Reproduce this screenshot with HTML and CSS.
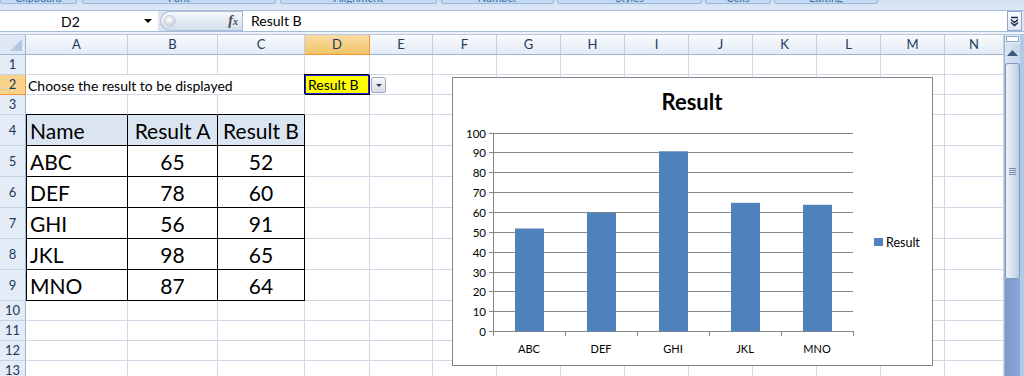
FILE: index.html
```html
<!DOCTYPE html>
<html lang="en">
  <head>
    <meta charset="UTF-8" />
    <meta name="viewport" content="width=device-width, initial-scale=1.0" />
    <title>Choose the result - Excel</title>
    <link rel="stylesheet" href="styles.css">
  </head>
  <body>
    <div class="ribbon">
      <div class="group g-clip"><span>Clipboard</span></div>
      <div class="group g-font"><span>Font</span></div>
      <div class="group g-align"><span>Alignment</span></div>
      <div class="group g-number"><span>Number</span></div>
      <div class="group g-styles"><span>Styles</span></div>
      <div class="group g-cells"><span>Cells</span></div>
      <div class="group g-edit"><span>Editing</span></div>
    </div>

    <div class="formula-bar">
      <div class="name-box"><span class="ref">D2</span><span class="drop"></span></div>
      <div class="fx-pill"><span class="knob"></span><span class="fx">f<small>x</small></span></div>
      <div class="formula">Result B</div>
      <div class="expand">
        <svg width="9" height="11" viewBox="0 0 9 11">
          <path d="M1 1.5h7M1 3.5l3.5 3 3.5-3M1 6.5l3.5 3 3.5-3" fill="none" stroke="#1d2d4c" stroke-width="1.4"/>
        </svg>
      </div>
    </div>
    <div class="bar-gap"></div>

    <div class="workarea">
      <div class="sheet">
        <div class="grid">
          <div class="corner"></div><div class="ch">A</div><div class="ch">B</div><div class="ch">C</div><div class="ch sel">D</div><div class="ch">E</div><div class="ch">F</div><div class="ch">G</div><div class="ch">H</div><div class="ch">I</div><div class="ch">J</div><div class="ch">K</div><div class="ch">L</div><div class="ch">M</div><div class="ch">N</div>
          <div class="rh">1</div><div></div><div></div><div></div><div></div><div></div><div></div><div></div><div></div><div></div><div></div><div></div><div></div><div></div><div></div>
          <div class="rh sel">2</div><div class="over intro">Choose the result to be displayed</div><div class="over"></div><div></div><div class="pick">Result B</div><div></div><div></div><div></div><div></div><div></div><div></div><div></div><div></div><div></div><div></div>
          <div class="rh">3</div><div class="above"></div><div class="above"></div><div class="above"></div><div></div><div></div><div></div><div></div><div></div><div></div><div></div><div></div><div></div><div></div><div></div>
          <div class="rh">4</div><div class="t hd first">Name</div><div class="t hd num">Result A</div><div class="t hd num">Result B</div><div></div><div></div><div></div><div></div><div></div><div></div><div></div><div></div><div></div><div></div><div></div>
          <div class="rh">5</div><div class="t first">ABC</div><div class="t num">65</div><div class="t num">52</div><div></div><div></div><div></div><div></div><div></div><div></div><div></div><div></div><div></div><div></div><div></div>
          <div class="rh">6</div><div class="t first">DEF</div><div class="t num">78</div><div class="t num">60</div><div></div><div></div><div></div><div></div><div></div><div></div><div></div><div></div><div></div><div></div><div></div>
          <div class="rh">7</div><div class="t first">GHI</div><div class="t num">56</div><div class="t num">91</div><div></div><div></div><div></div><div></div><div></div><div></div><div></div><div></div><div></div><div></div><div></div>
          <div class="rh">8</div><div class="t first">JKL</div><div class="t num">98</div><div class="t num">65</div><div></div><div></div><div></div><div></div><div></div><div></div><div></div><div></div><div></div><div></div><div></div>
          <div class="rh">9</div><div class="t first">MNO</div><div class="t num">87</div><div class="t num">64</div><div></div><div></div><div></div><div></div><div></div><div></div><div></div><div></div><div></div><div></div><div></div>
          <div class="rh">10</div><div></div><div></div><div></div><div></div><div></div><div></div><div></div><div></div><div></div><div></div><div></div><div></div><div></div><div></div>
          <div class="rh">11</div><div></div><div></div><div></div><div></div><div></div><div></div><div></div><div></div><div></div><div></div><div></div><div></div><div></div><div></div>
          <div class="rh">12</div><div></div><div></div><div></div><div></div><div></div><div></div><div></div><div></div><div></div><div></div><div></div><div></div><div></div><div></div>
          <div class="rh">13</div><div></div><div></div><div></div><div></div><div></div><div></div><div></div><div></div><div></div><div></div><div></div><div></div><div></div><div></div>
        </div>

        <!-- data validation list button next to D2 -->
        <div class="list-btn"><span></span></div>

        <div class="chart">
          <svg width="479" height="287" viewBox="0 0 479 287">
            <text class="title" x="239" y="32">Result</text>
            <path class="lines" d="M36 55.5H400M36 74.5H400M36 94.5H400M36 114.5H400M36 134.5H400M36 154.5H400M36 174.5H400M36 194.5H400M36 213.5H400M36 233.5H400M36 253.5H400M40.5 55V258M112.5 253V258M184.5 253V258M256.5 253V258M328.5 253V258M400.5 253V258"/>
            <g class="bars">
              <rect x="62" y="150.5" width="29" height="103"/>
              <rect x="134" y="134.7" width="29" height="118.8"/>
              <rect x="206" y="73.3" width="29" height="180.2"/>
              <rect x="278" y="124.8" width="29" height="128.7"/>
              <rect x="350" y="126.8" width="29" height="126.7"/>
            </g>
            <g class="yaxis">
              <text x="33" y="59.5">100</text>
              <text x="33" y="78.5">90</text>
              <text x="33" y="98.5">80</text>
              <text x="33" y="118.5">70</text>
              <text x="33" y="138.5">60</text>
              <text x="33" y="158.5">50</text>
              <text x="33" y="178.5">40</text>
              <text x="33" y="198.5">30</text>
              <text x="33" y="217.5">20</text>
              <text x="33" y="237.5">10</text>
              <text x="33" y="257.5">0</text>
            </g>
            <g class="xaxis">
              <text x="76" y="275">ABC</text>
              <text x="148" y="275">DEF</text>
              <text x="220" y="275">GHI</text>
              <text x="292" y="275">JKL</text>
              <text x="364" y="275">MNO</text>
            </g>
            <rect class="key" x="421" y="160" width="9" height="8"/>
            <text class="legend" x="433" y="169">Result</text>
          </svg>
        </div>
      </div>

      <div class="vscroll">
        <div class="split"><span></span></div>
        <div class="arrow-up">
          <svg width="11" height="6" viewBox="0 0 11 6"><path d="M0 6L5.5 0 11 6Z" fill="#40577e"/></svg>
        </div>
        <div class="thumb"><span class="grip"></span></div>
        <div class="track"></div>
      </div>
    </div>
  </body>
</html>
```

FILE: styles.css
```css
body {
  margin: 0;
  width: 1024px;
  height: 376px;
  overflow: hidden;
  font-family: Lato, "Open Sans", sans-serif;
  background: #fff;
}

/* ribbon, only the bottom of the group labels is visible */
.ribbon {
  display: flex;
  height: 10px;
  background: linear-gradient(#cfdff3, #dfe9f6);
}

.group {
  box-sizing: border-box;
  height: 4px;
  margin-right: 4px;
  background: #c3d8f1;
  border: 1px solid #9bb9de;
  border-top: none;
  border-radius: 0 0 3px 3px;
  overflow: hidden;
  text-align: center;
  font-size: 11px;
  line-height: 11px;
  color: #3e6aaa;
}
.group span {
  display: block;
  margin-top: -8px;
}
.g-clip { width: 77px; margin-right: 5px; }
.g-font { width: 194px; }
.g-align { width: 157px; }
.g-number { width: 113px; margin-right: 3px; }
.g-styles { width: 145px; margin-right: 3px; }
.g-cells { width: 66px; margin-right: 3px; }
.g-edit { width: 104px; }

/* formula bar */
.formula-bar {
  box-sizing: border-box;
  display: flex;
  height: 22px;
  border-top: 1px solid #a4bcdc;
  border-bottom: 1px solid #a4bcdc;
  background: #dbe6f4;
  font-size: 14px;
}

.name-box {
  display: flex;
  align-items: center;
  width: 158px;
  background: #fff;
}
.name-box .ref {
  width: 141px;
  text-align: center;
}
.name-box .drop {
  width: 0;
  height: 0;
  margin-left: 3px;
  border-left: 4px solid transparent;
  border-right: 4px solid transparent;
  border-top: 4px solid #000;
}

.fx-pill {
  box-sizing: border-box;
  display: flex;
  align-items: center;
  justify-content: space-between;
  width: 82px;
  margin-left: 2px;
  padding: 0 4px 0 3px;
  background: linear-gradient(#f5f8fc, #d3deec);
  border: 1px solid #aebfd7;
  border-right: none;
  border-radius: 10px 0 0 10px;
}
.knob {
  width: 10px;
  height: 10px;
  border-radius: 50%;
  background: radial-gradient(circle at 40% 35%, #ffffff, #b9c2cf);
  border: 1px solid #c6cfdb;
}
.fx {
  font-family: "Liberation Serif", serif;
  font-style: italic;
  font-weight: bold;
  font-size: 14px;
  color: #4a4a4a;
}
.fx small {
  font-size: 10px;
}

.formula {
  flex: 1;
  padding-left: 8px;
  line-height: 20px;
  background: #fff;
  border-left: 1px solid #a4bcdc;
}

.expand {
  box-sizing: border-box;
  display: flex;
  align-items: center;
  justify-content: center;
  width: 15px;
  margin-right: 2px;
  background: linear-gradient(#fbfcfe, #dce6f3);
  border: 1px solid #8ea7c9;
}

.bar-gap {
  box-sizing: border-box;
  height: 3px;
  background: #eef2f8;
  border-bottom: 1px solid #b7c8de;
}

/* sheet */
.workarea {
  display: flex;
  height: 341px;
}

.sheet {
  position: relative;
  width: 1004px;
}

.grid {
  display: grid;
  grid-template-columns: 26px 102px 90px 87px 65px 63px repeat(8, 64px) 59px;
  grid-template-rows: 20px 20px 20px 20px 31px repeat(5, 31px) repeat(4, 20px);
}

.grid > div {
  box-sizing: border-box;
  display: flex;
  align-items: flex-end;
  padding: 0 3px 1px;
  border-right: 1px solid #d0d7e5;
  border-bottom: 1px solid #d0d7e5;
  font-size: 14px;
  line-height: 1;
  white-space: nowrap;
}

.grid > .corner {
  position: relative;
  background: #dfe8f5;
  border-right: 1px solid #9eb6ce;
  border-bottom: 1px solid #9eb6ce;
}
.corner::after {
  content: "";
  position: absolute;
  right: 3px;
  bottom: 3px;
  border-left: 12px solid transparent;
  border-bottom: 12px solid #b4c8e4;
}

.grid > .ch {
  align-items: center;
  justify-content: center;
  padding: 0;
  font-size: 13px;
  color: #22395a;
  background: linear-gradient(#f9fbfd, #e3eaf5);
  border-right: 1px solid #c2d0e2;
  border-bottom: 1px solid #9eb6ce;
}

.grid > .rh {
  align-items: center;
  justify-content: center;
  padding: 0;
  font-size: 13px;
  color: #22395a;
  background: #e4ecf7;
  border-right: 1px solid #9eb6ce;
  border-bottom: 1px solid #c5d3e6;
}

.grid > .ch.sel {
  background: linear-gradient(#f9dba4, #f2c468);
  border-right-color: #f29536;
  border-bottom-color: #f29536;
}
.grid > .rh.sel {
  background: #f8d38d;
  border-bottom-color: #f29536;
  border-right-color: #f29536;
}

.grid > .over {
  border-right: none;
}
.grid > .intro {
  padding-left: 2px;
}

.grid > .above {
  border-bottom-color: #000;
}

.grid > .pick {
  padding-left: 3px;
  padding-bottom: 2px;
  background: #ffff00;
  border-right-color: #000;
  border-bottom-color: #000;
  box-shadow: -1px -1px 0 #000, inset 1px 1px 0 #2323ff, inset -1px -1px 0 #2323ff;
}

.grid > .t {
  padding-bottom: 4px;
  font-size: 21px;
  border-right-color: #000;
  border-bottom-color: #000;
}
.grid > .first {
  border-left: 1px solid #000;
}
.grid > .hd {
  background: #dbe5f1;
}
.grid > .num {
  justify-content: center;
}

.list-btn {
  position: absolute;
  left: 371px;
  top: 42px;
  box-sizing: border-box;
  width: 15px;
  height: 16px;
  display: flex;
  align-items: center;
  justify-content: center;
  background: linear-gradient(#f8f9fb, #d6dbe4);
  border: 1px solid #a3abbb;
  border-radius: 2px;
}
.list-btn span {
  width: 0;
  height: 0;
  border-left: 3px solid transparent;
  border-right: 3px solid transparent;
  border-top: 3px solid #2c3e62;
}

/* chart object over the grid */
.chart {
  position: absolute;
  left: 452px;
  top: 42px;
  width: 481px;
  height: 289px;
  box-sizing: border-box;
  background: #fff;
  border: 1px solid #868686;
}
.chart svg {
  display: block;
  font-family: Lato, sans-serif;
}
.chart .title {
  font-size: 22px;
  font-weight: bold;
  text-anchor: middle;
}
.chart .lines {
  fill: none;
  stroke: #868686;
  stroke-width: 1;
}
.chart .bars rect,
.chart .key {
  fill: #4f81bd;
}
.chart .yaxis text {
  font-size: 11.5px;
  text-anchor: end;
}
.chart .xaxis text {
  font-size: 11px;
  text-anchor: middle;
}
.chart .legend {
  font-size: 12.5px;
}

/* vertical scrollbar */
.vscroll {
  box-sizing: border-box;
  display: flex;
  flex-direction: column;
  width: 20px;
  padding-right: 4px;
  background: #b2caea;
  border-left: 1px solid #9eb6ce;
}

.split {
  height: 8px;
  padding: 1px 1px 0;
  background: #dfe8f5;
}
.split span {
  display: block;
  box-sizing: border-box;
  height: 6px;
  background: #fff;
  border: 1px solid #8ea7c9;
}

.arrow-up {
  height: 19px;
  display: flex;
  justify-content: center;
  padding-top: 6px;
  box-sizing: border-box;
  background: linear-gradient(to right, #dae4f2, #c9d7ea);
}

.thumb {
  box-sizing: border-box;
  height: 216px;
  display: flex;
  align-items: center;
  justify-content: center;
  background: linear-gradient(to right, #eef2f8, #d2ddec 60%, #bccde4);
  border: 1px solid #7f98c0;
  border-radius: 3px;
}
.grip {
  width: 7px;
  height: 7px;
  background: repeating-linear-gradient(#7d8ca6 0 1px, transparent 1px 2px);
}

.track {
  flex: 1;
  background: linear-gradient(to right, #7b99c9, #8aa8d6);
}
```
